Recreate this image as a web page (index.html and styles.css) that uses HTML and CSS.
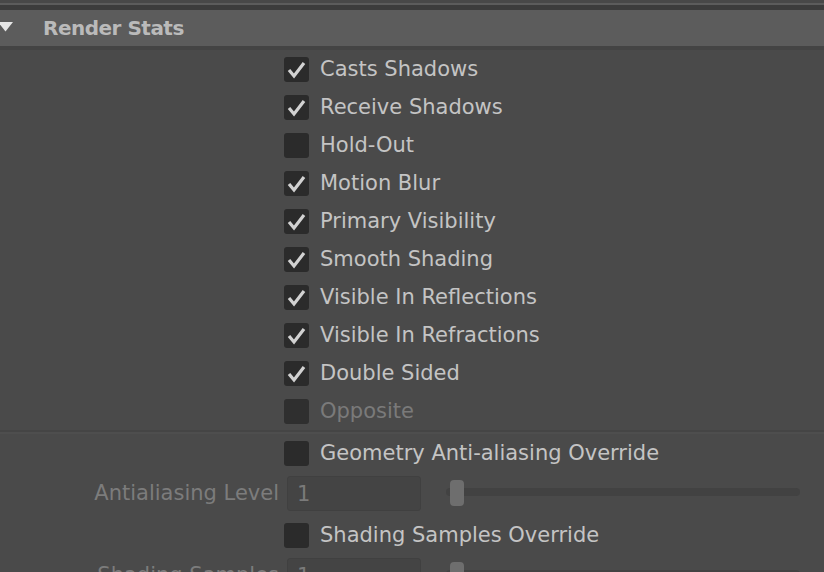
FILE: index.html
```html
<!DOCTYPE html>
<html>
<head>
<meta charset="utf-8">
<link rel="stylesheet" href="styles.css">
</head>
<body>
<div class="panel">
  <div class="strip-a"></div>
  <div class="strip-b"></div>
  <div class="strip-c"></div>
  <div class="header">
    <svg class="arrow" width="14" height="12" viewBox="0 0 14 12"><polygon points="-2,1 13,1 5.5,10.5" fill="#e6e6e6"/></svg>
    <span class="title">Render Stats</span>
  </div>
  <div class="strip-d"></div>

  <div class="checks">
    <div class="row"><span class="box on"><svg viewBox="0 0 25 25"><polyline points="5,13 10,19 20,6"/></svg></span><span class="lbl">Casts Shadows</span></div>
    <div class="row"><span class="box on"><svg viewBox="0 0 25 25"><polyline points="5,13 10,19 20,6"/></svg></span><span class="lbl">Receive Shadows</span></div>
    <div class="row"><span class="box"></span><span class="lbl">Hold-Out</span></div>
    <div class="row"><span class="box on"><svg viewBox="0 0 25 25"><polyline points="5,13 10,19 20,6"/></svg></span><span class="lbl">Motion Blur</span></div>
    <div class="row"><span class="box on"><svg viewBox="0 0 25 25"><polyline points="5,13 10,19 20,6"/></svg></span><span class="lbl">Primary Visibility</span></div>
    <div class="row"><span class="box on"><svg viewBox="0 0 25 25"><polyline points="5,13 10,19 20,6"/></svg></span><span class="lbl">Smooth Shading</span></div>
    <div class="row"><span class="box on"><svg viewBox="0 0 25 25"><polyline points="5,13 10,19 20,6"/></svg></span><span class="lbl">Visible In Reflections</span></div>
    <div class="row"><span class="box on"><svg viewBox="0 0 25 25"><polyline points="5,13 10,19 20,6"/></svg></span><span class="lbl">Visible In Refractions</span></div>
    <div class="row"><span class="box on"><svg viewBox="0 0 25 25"><polyline points="5,13 10,19 20,6"/></svg></span><span class="lbl">Double Sided</span></div>
    <div class="row disabled"><span class="box"></span><span class="lbl">Opposite</span></div>
  </div>

  <div class="separator"></div>

  <div class="checks">
    <div class="row"><span class="box"></span><span class="lbl">Geometry Anti-aliasing Override</span></div>
  </div>
  <div class="slider-row">
    <span class="slbl">Antialiasing Level</span>
    <span class="field">1</span>
    <span class="track"><span class="thumb"></span></span>
  </div>
  <div class="checks">
    <div class="row"><span class="box"></span><span class="lbl">Shading Samples Override</span></div>
  </div>
  <div class="slider-row">
    <span class="slbl">Shading Samples</span>
    <span class="field">1</span>
    <span class="track"><span class="thumb"></span></span>
  </div>
</div>
</body>
</html>
```

FILE: styles.css
```css
html, body {
  margin: 0;
  padding: 0;
  background: #4a4a4a;
}
.panel {
  width: 824px;
  height: 572px;
  overflow: hidden;
  background: #4a4a4a;
  font-family: "DejaVu Sans", "Liberation Sans", sans-serif;
}
.strip-a { height: 3px; background: #484848; }
.strip-b { height: 2px; background: #5c5c5c; }
.strip-c { height: 5px; background: #3c3c3c; }
.header {
  height: 36px;
  background: #5c5c5c;
  display: flex;
  align-items: center;
}
.arrow {
  display: block;
  margin-left: 0;
  margin-top: -2px;
}
.title {
  margin-left: 29px;
  font-weight: bold;
  font-size: 20px;
  letter-spacing: -0.5px;
  color: #bababa;
}
.strip-d { height: 4px; background: #444444; }

.checks {
  padding-left: 284px;
}
.row {
  height: 38px;
  display: flex;
  align-items: center;
}
.box {
  width: 25px;
  height: 25px;
  border-radius: 3px;
  background: #2b2b2b;
  flex: none;
  display: block;
}
.box svg {
  display: block;
  width: 25px;
  height: 25px;
}
.box polyline {
  fill: none;
  stroke: #d2d2d2;
  stroke-width: 3.2;
  stroke-linejoin: miter;
}
.lbl {
  margin-left: 11px;
  font-size: 21px;
  color: #c4c4c4;
}
.disabled .lbl { color: #7a7a7a; }
.disabled .box { background: #2f2f2f; }

.separator {
  height: 4px;
  box-sizing: border-box;
  border-top: 2px solid #454545;
  border-bottom: 2px solid #4e4e4e;
}

.slider-row {
  height: 44px;
  display: flex;
  align-items: flex-start;
}
.slbl {
  width: 279px;
  text-align: right;
  font-size: 21px;
  color: #7c7c7c;
  line-height: 35px;
  margin-top: 4px;
  flex: none;
  white-space: nowrap;
}
.field {
  margin-left: 8px;
  margin-top: 4px;
  width: 134px;
  height: 35px;
  box-sizing: border-box;
  border: 1px solid #404040;
  border-radius: 3px;
  background: #444444;
  color: #7a7a7a;
  font-size: 21px;
  line-height: 35px;
  padding-left: 9px;
  flex: none;
}
.track {
  margin-left: 25px;
  margin-top: 16px;
  width: 354px;
  height: 8px;
  border-radius: 4px;
  background: #424242;
  position: relative;
  flex: none;
}
.thumb {
  position: absolute;
  left: 4px;
  top: -8px;
  width: 14px;
  height: 26px;
  border-radius: 4px;
  background: #6e6e6e;
}
```
